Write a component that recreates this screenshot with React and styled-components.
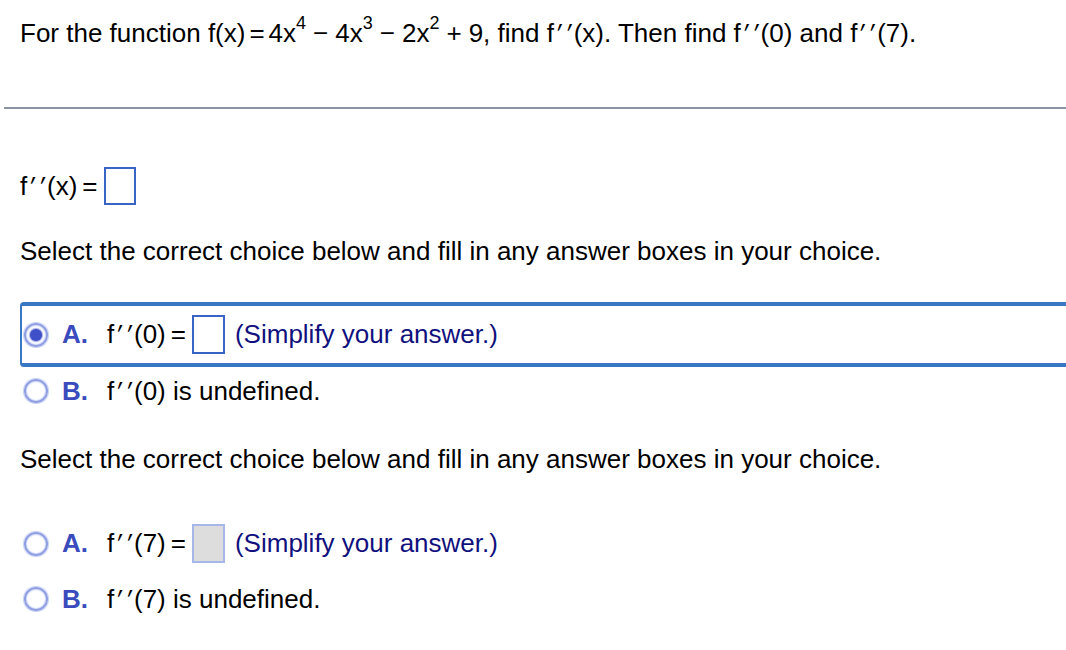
import React from 'react'
import styled, { createGlobalStyle } from 'styled-components'

const GlobalStyle = createGlobalStyle`
    html, body {
        margin: 0;
        padding: 0;
        background: #ffffff;
        overflow: hidden;
    }
    body {
        font-family: "Liberation Sans", Arial, Helvetica, sans-serif;
        color: #000000;
    }
`

const Page = styled.div`
    width: 1066px;
    height: 650px;
    padding-top: 19px;
    box-sizing: border-box;
`

const Line = styled.div`
    font-size: 26px;
    line-height: 28px;
    height: 28px;
    padding-left: 20px;
    margin-top: ${p => p.top || 0}px;
    white-space: nowrap;
`

const Sup = styled.sup`
    font-size: 18px;
    position: relative;
    top: -5px;
    vertical-align: top;
    line-height: 1;
`

const Op = styled.span`
    margin: 0 ${p => p.m || 4}px;
`

const Prime = styled.span`
    display: inline-block;
    margin-left: 2px;
    margin-right: 3px;
    transform: skewX(-12deg);
`

const Divider = styled.div`
    margin: 60px 0 0 4px;
    height: 2px;
    background: #8c94a1;
`

const MathRow = styled.div`
    display: flex;
    align-items: center;
    font-size: 26px;
    height: 38px;
    padding-left: 20px;
    margin-top: ${p => p.top || 0}px;
`

const AnswerBox = styled.span`
    display: inline-block;
    box-sizing: border-box;
    width: ${p => p.w || 33}px;
    height: ${p => p.h || 39}px;
    border: 2px solid ${p => (p.disabled ? '#a7b7ea' : '#3a63c6')};
    background: ${p => (p.disabled ? '#dddddd' : '#ffffff')};
    margin-left: 6px;
`

const Option = styled.div`
    display: flex;
    align-items: center;
    box-sizing: border-box;
    font-size: 26px;
    margin-top: ${p => p.top || 0}px;
    margin-left: ${p => (p.selected ? 20 : 24)}px;
    height: ${p => (p.selected ? 65 : p.h || 28)}px;
    width: ${p => (p.selected ? '1060px' : 'auto')};
    padding-left: ${p => (p.selected ? 2 : 0)}px;
    border: ${p => (p.selected ? '4px solid #3877c4' : 'none')};
    border-left-width: ${p => (p.selected ? 2 : 0)}px;
    border-right: none;
    border-radius: 4px 0 0 4px;
`

const Radio = styled.span`
    position: relative;
    display: inline-block;
    box-sizing: border-box;
    width: 24px;
    height: 24px;
    border-radius: 50%;
    border: 2px solid #8e9ee2;
    box-shadow: 0 0 1px 1px rgba(160, 175, 235, 0.6), inset 0 0 1px 1px rgba(185, 195, 240, 0.6);
    flex-shrink: 0;
    &::after {
        content: '';
        display: ${p => (p.checked ? 'block' : 'none')};
        position: absolute;
        left: 50%;
        top: 50%;
        width: 12px;
        height: 12px;
        margin: -6px 0 0 -6px;
        border-radius: 50%;
        background: #3e4fc7;
        box-shadow: 0 0 1px 1px rgba(62, 79, 199, 0.5);
    }
`

const Letter = styled.span`
    font-weight: bold;
    color: #3a4bbd;
    width: 45px;
    margin-left: 14px;
`

const Content = styled.span`
    display: flex;
    align-items: center;
    white-space: nowrap;
`

const Hint = styled.span`
    color: #11117e;
    margin-left: 10px;
`

const Eq = styled.span`
    margin-left: 5px;
`

const Fpp = () => (
  <>
    f<Prime>′</Prime><Prime>′</Prime>
  </>
)

const App = () => {
  return (
    <>
      <GlobalStyle />
      <Page>
        <Line>
          For the function f(x)<Op m={4}>=</Op>4x<Sup>4</Sup>
          <Op m={7}>−</Op>4x<Sup>3</Sup>
          <Op m={7}>−</Op>2x<Sup>2</Sup>
          <Op m={7}>+</Op>9, find <Fpp />(x). Then find <Fpp />(0) and <Fpp />(7).
        </Line>
        <Divider />
        <MathRow top={58}>
          <Fpp />(x)<Eq>=</Eq>
          <AnswerBox w={32} h={38} />
        </MathRow>
        <Line top={32}>Select the correct choice below and fill in any answer boxes in your choice.</Line>
        <Option selected top={37}>
          <Radio checked />
          <Letter>A.</Letter>
          <Content>
            <Fpp />(0)<Eq>=</Eq>
            <AnswerBox />
            <Hint>(Simplify your answer.)</Hint>
          </Content>
        </Option>
        <Option top={10}>
          <Radio />
          <Letter>B.</Letter>
          <Content>
            <Fpp />(0) is undefined.
          </Content>
        </Option>
        <Line top={40}>Select the correct choice below and fill in any answer boxes in your choice.</Line>
        <Option top={51} h={39}>
          <Radio />
          <Letter>A.</Letter>
          <Content>
            <Fpp />(7)<Eq>=</Eq>
            <AnswerBox disabled />
            <Hint>(Simplify your answer.)</Hint>
          </Content>
        </Option>
        <Option top={22}>
          <Radio />
          <Letter>B.</Letter>
          <Content>
            <Fpp />(7) is undefined.
          </Content>
        </Option>
      </Page>
    </>
  )
}

export default App
